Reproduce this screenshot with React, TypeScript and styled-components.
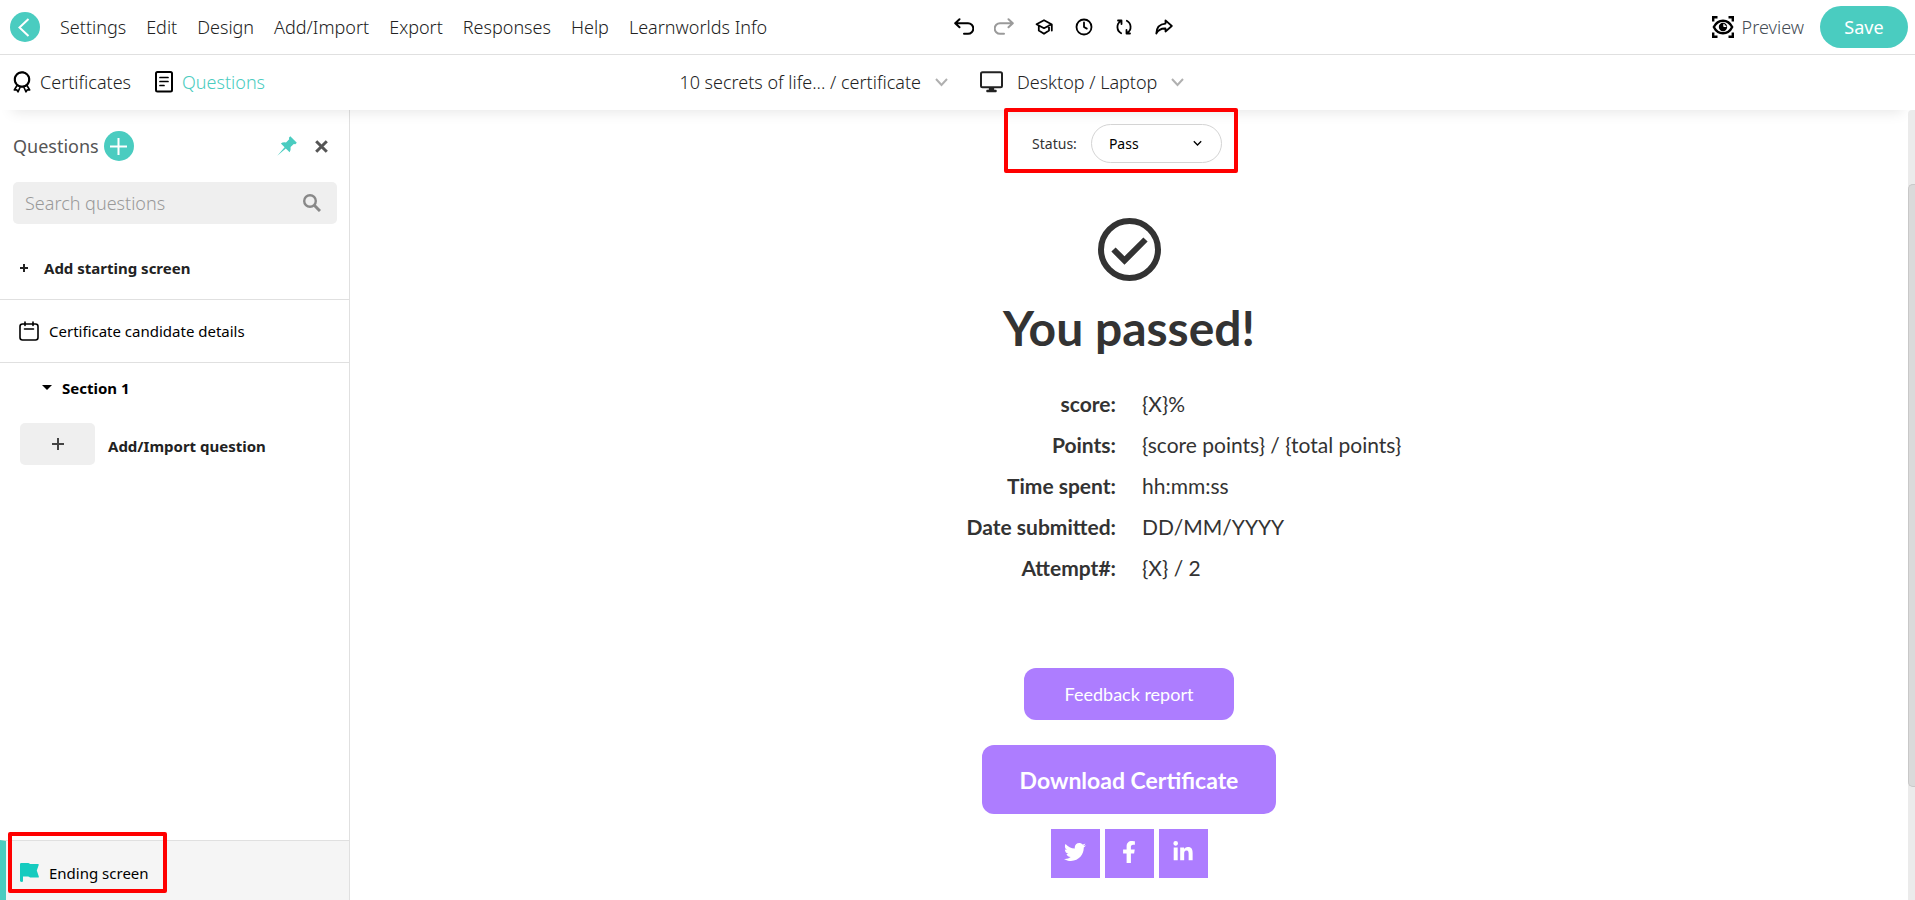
import React from "react";
import styled, { createGlobalStyle } from "styled-components";
import { FaTwitter, FaFacebookF, FaLinkedinIn } from "react-icons/fa";

const teal = "#4accc0";
const line = "#e0e0e0";
const violet = "#ad7dff";
const ink = "#333333";

const GlobalStyle = createGlobalStyle`
  *, *::before, *::after { box-sizing: border-box; }
  body { margin: 0; background: #fff; color: #222; font-family: "Noto Sans", sans-serif; font-size: 18px; font-weight: 300; }
  button, input, select { font: inherit; color: inherit; margin: 0; padding: 0; border: 0; background: none; }
  a { color: inherit; text-decoration: none; }
  svg { display: block; flex: none; }
`;

const Page = styled.div`
  display: flex;
  flex-direction: column;
  height: 100vh;
  overflow: hidden;
`;

const TopBar = styled.header`
  display: grid;
  grid-template-columns: 99fr 100fr;
  align-items: center;
  height: 55px;
  flex: none;
  padding: 0 7px 0 10px;
  border-bottom: 1px solid ${line};
`;

const Menu = styled.nav`
  display: flex;
  align-items: center;
  gap: 20px;
`;

const MenuButton = styled.button`
  line-height: 24px;
  white-space: nowrap;
`;

const RoundButton = styled.button`
  display: grid;
  place-items: center;
  width: 30px;
  height: 30px;
  border-radius: 50%;
  background: ${teal};
  color: #fff;
`;

const Tools = styled.div`
  display: flex;
  align-items: center;
  justify-content: space-between;
`;

const ToolGroup = styled.div`
  display: flex;
  align-items: center;
  gap: 20px;
`;

const IconButton = styled.button<{ $faded?: boolean }>`
  display: grid;
  place-items: center;
  width: 20px;
  height: 24px;
  color: ${(p) => (p.$faded ? "#9a9a9a" : "#000")};
`;

const Actions = styled.div`
  display: flex;
  align-items: center;
  gap: 16px;
`;

const PreviewButton = styled.button`
  display: flex;
  align-items: center;
  gap: 8px;
  color: #444c55;

  svg { color: #000; }
`;

const SaveButton = styled.button`
  width: 88px;
  height: 42px;
  border-radius: 21px;
  background: ${teal};
  color: #fff;
  font-weight: 400;
`;

const SubBar = styled.div`
  position: relative;
  z-index: 2;
  display: grid;
  grid-template-columns: 13fr auto 14fr;
  align-items: center;
  height: 55px;
  flex: none;
  padding: 0 13px 1px;
  background: #fff;
  box-shadow: 0 14px 14px -12px rgba(0, 0, 0, 0.1);
`;

const Tabs = styled.nav`
  display: flex;
  align-items: center;
  gap: 24px;
`;

const Tab = styled.a<{ $active?: boolean }>`
  display: flex;
  align-items: center;
  gap: 9px;
  color: ${(p) => (p.$active ? teal : "#222")};

  svg { color: #000; }
`;

const Pickers = styled.div`
  display: flex;
  align-items: center;
  gap: 32px;
`;

const Picker = styled.button`
  display: flex;
  align-items: center;
  gap: 14px;
  white-space: nowrap;
`;

const Body = styled.div`
  display: flex;
  flex: 1;
  min-height: 0;
`;

const Sidebar = styled.aside`
  display: flex;
  flex-direction: column;
  width: 350px;
  flex: none;
  border-right: 1px solid ${line};
`;

const PanelHead = styled.div`
  display: flex;
  align-items: center;
  padding: 21px 18px 21px 13px;
`;

const PanelTitle = styled.h2`
  margin: 0 5px 0 0;
  font-size: 18px;
  font-weight: 400;
  line-height: 24px;
  color: #555;
`;

const PanelTools = styled.div`
  display: flex;
  align-items: center;
  gap: 14px;
  margin-left: auto;
`;

const PanelButton = styled.button<{ $accent?: boolean }>`
  display: grid;
  place-items: center;
  width: 20px;
  height: 24px;
  color: ${(p) => (p.$accent ? teal : "#555")};
`;

const SearchField = styled.label`
  display: flex;
  align-items: center;
  height: 42px;
  margin: 0 12px 0 13px;
  padding: 0 16px 0 12px;
  border-radius: 5px;
  background: #efefef;
  color: #888;
`;

const SearchInput = styled.input`
  flex: 1;
  min-width: 0;
  outline: 0;
  color: ${ink};

  &::placeholder { color: #999; opacity: 1; }
`;

const StartRow = styled.button`
  display: flex;
  align-items: center;
  gap: 16px;
  height: 76px;
  padding: 13px 20px 0;
  border-bottom: 1px solid ${line};
  font-size: 15px;
  font-weight: 700;
`;

const DetailsRow = styled.button`
  display: flex;
  align-items: center;
  gap: 10px;
  height: 63px;
  padding: 0 19px;
  border-bottom: 1px solid ${line};
  font-size: 15px;
  font-weight: 400;
  color: #000;
`;

const SectionRow = styled.button`
  display: flex;
  align-items: center;
  gap: 10px;
  height: 50px;
  padding: 0 42px;
  font-size: 15px;
  font-weight: 700;
  color: #000;
`;

const AddRow = styled.div`
  display: flex;
  align-items: center;
  gap: 13px;
  padding: 10px 20px;
`;

const AddTile = styled.button`
  display: grid;
  place-items: center;
  width: 75px;
  height: 42px;
  border-radius: 5px;
  background: #efefef;
  color: #444;
`;

const AddLabel = styled.label`
  padding-top: 4px;
  font-size: 15px;
  font-weight: 700;
`;

const EndingRow = styled.button`
  position: relative;
  display: flex;
  align-items: center;
  gap: 10px;
  height: 60px;
  margin-top: auto;
  padding: 4px 20px 0 14px;
  border-top: 1px solid ${line};
  border-left: 6px solid ${teal};
  background: #f5f5f5;
  font-size: 15px;
  font-weight: 400;
  color: #000;
`;

const Highlight = styled.span`
  position: absolute;
  border: 4px solid #ff0000;
  border-radius: 2px;
  pointer-events: none;
`;

const EndingHighlight = styled(Highlight)`
  top: -9px;
  left: 2px;
  width: 159px;
  height: 61px;
`;

const StatusHighlight = styled(Highlight)`
  inset: -16px -16px -10px -28px;
`;

const Canvas = styled.main`
  display: flex;
  flex-direction: column;
  align-items: center;
  flex: 1;
  min-width: 0;
  color: ${ink};
  font-family: Lato, sans-serif;
  font-weight: 400;
`;

const StatusBar = styled.div`
  position: relative;
  z-index: 3;
  display: flex;
  align-items: center;
  gap: 14px;
  margin: 14px 4px 0 0;
  font-family: "Noto Sans", sans-serif;
  font-size: 14px;
`;

const SelectWrap = styled.div`
  position: relative;

  svg { position: absolute; right: 20px; top: 16px; pointer-events: none; }
`;

const StatusSelect = styled.select`
  display: block;
  width: 131px;
  height: 39px;
  padding-left: 17px;
  border: 1px solid #d4d4d4;
  border-radius: 20px;
  appearance: none;
  background: #fff;
  color: #000;
`;

const Badge = styled.div`
  margin-top: 55px;
`;

const Title = styled.h1`
  margin: 17px 0 0;
  font-size: 48px;
  font-weight: 700;
  line-height: 60px;
`;

const Results = styled.table`
  width: 100%;
  margin-top: 25px;
  table-layout: fixed;
  border-collapse: collapse;
  font-size: 21px;
  line-height: 41px;

  th, td { width: 50%; padding: 0 13px; }
  th { text-align: right; font-weight: 700; }
`;

const FeedbackButton = styled.button`
  width: 210px;
  height: 52px;
  margin-top: 80px;
  border-radius: 12px;
  background: ${violet};
  color: #fff;
  font-size: 18px;
`;

const DownloadButton = styled.button`
  width: 294px;
  height: 69px;
  margin-top: 25px;
  border-radius: 12px;
  background: ${violet};
  color: #fff;
  font-size: 23px;
  font-weight: 700;
`;

const Social = styled.div`
  display: flex;
  gap: 5px;
  margin-top: 15px;
`;

const SocialLink = styled.a`
  display: grid;
  place-items: center;
  width: 49px;
  height: 49px;
  padding-bottom: 3px;
  background: ${violet};
  color: #fff;
  font-size: 22px;
`;

const ScrollTrack = styled.div`
  display: flex;
  flex-direction: column;
  position: relative;
  z-index: 3;
  width: 7px;
  border-radius: 4px 0 0 0;
  background: #ebebeb;

  &::before { content: ""; flex: 74; }
  &::after { content: ""; flex: 113; }
`;

const ScrollThumb = styled.div`
  flex: 603;
  border: 1px solid #c8c8c8;
  border-right: 0;
  border-radius: 5px 0 0 5px;
  background: #dadada;
`;

type StrokeProps = { w: number; h: number; sw?: number; children: React.ReactNode };
const Stroke = ({ w, h, sw = 2, children }: StrokeProps) => (
  <svg width={w} height={h} viewBox={`0 0 ${w} ${h}`} fill="none" stroke="currentColor" strokeWidth={sw} strokeLinecap="round" strokeLinejoin="round" aria-hidden="true">
    {children}
  </svg>
);

const BackIcon = () => <Stroke w={30} h={30}><path d="M18.500 7 9.500 15.500 18.500 24" strokeLinejoin="miter" strokeLinecap="butt" /></Stroke>;
const UndoIcon = () => <Stroke w={20} h={18}><path d="M5.500 1.200 1.200 5.200l4.300 4M1.500 5.200H14a5 5 0 0 1 0 10.600H10" /></Stroke>;
const RedoIcon = () => <Stroke w={20} h={18}><path d="m14.500 1.200 4.300 4-4.300 4M18.500 5.200H6a5 5 0 0 0 0 10.600h4" /></Stroke>;
const CapIcon = () => (
  <Stroke w={18} h={16} sw={1.8}><path d="M9 1.200 1.500 5.200 9 9.200l7.500-4zM3.800 6.500v5L9 14.800l5-3.300v-5M16.800 5.500v6" /></Stroke>
);
const ClockIcon = () => <Stroke w={18} h={18} sw={1.8}><circle cx="9" cy="9" r="7.500" /><path d="M9 4.500V9l2.800 1.600" /></Stroke>;
const SyncIcon = () => (
  <Stroke w={16} h={16} sw={1.8}><path d="M5.200 14.200A7 7 0 0 1 4.500 2.200M2 1.500h3.500V5M10.800 1.800A7 7 0 0 1 11.500 13.800M14 14.500h-3.500V11" /></Stroke>
);
const ShareIcon = () => (
  <Stroke w={18} h={16} sw={1.8}><path d="M10.500 1.300 16.800 7l-6.300 5.500V9.500C6 9.300 3.300 10.500 1.300 14.500 1.500 9 4.500 5 10.500 4.600z" /></Stroke>
);
const PreviewIcon = () => (
  <Stroke w={22} h={22} sw={2.4}>
    <path d="M1.200 5.500V1.200H5.500M16.500 1.200h4.300V5.500M20.800 16.500v4.300H16.500M5.500 20.800H1.200V16.500" strokeLinecap="butt" strokeLinejoin="miter" />
    <path d="M1.800 11C6 2.600 16 2.600 20.200 11 16 19.400 6 19.400 1.800 11z" />
    <circle cx="11" cy="11" r="3" fill="currentColor" />
    <path d="M12 8.500v1.800h1.800" stroke="#fff" strokeWidth="1.400" />
  </Stroke>
);
const MedalIcon = () => (
  <Stroke w={18} h={22}>
    <circle cx="9" cy="8.500" r="7.300" strokeDasharray="3.400 1.200" />
    <circle cx="9" cy="8.500" r="7" strokeWidth="1.500" />
    <path d="M4 14.500 1.300 19l2.400-.2L5 20.800 7 16.500M14 14.500l2.700 4.500-2.400-.2-1.300 2L11 16.500" strokeWidth="1.600" />
  </Stroke>
);
const DocIcon = () => (
  <Stroke w={18} h={22}><rect x="1" y="1" width="16" height="19.500" rx="1.500" /><path d="M5 6.500h8M5 10.500h8M5 14.500h4" strokeWidth="1.700" /></Stroke>
);
const ChevronIcon = () => <svg width="13" height="10" viewBox="0 0 13 10" fill="none" stroke="#b0b0b0" strokeWidth="2" aria-hidden="true"><path d="m1 2 5.500 6L12 2" /></svg>;
const MonitorIcon = () => (
  <Stroke w={23} h={22}><rect x="1" y="1.200" width="21" height="15" rx="1.500" /><path d="M9.500 17.500h4v2h2.500v1H7v-1h2.500z" fill="currentColor" strokeWidth="1.400" /></Stroke>
);
const PlusIcon = ({ size, sw }: { size: number; sw: number }) => (
  <svg width={size} height={size} viewBox={`0 0 ${size} ${size}`} stroke="currentColor" strokeWidth={sw} aria-hidden="true">
    <path d={`M${size / 2} 0v${size}M0 ${size / 2}h${size}`} />
  </svg>
);
const PinIcon = () => (
  <svg width="20" height="20" viewBox="0 0 20 20" fill="currentColor" aria-hidden="true">
    <path d="M13.300.3 19.800 6.800 18.300 8.200 16.800 7.900 13.600 11.100Q14 14.600 12.600 16.200L8.800 12.400.3 19.800 7.600 11.200 3.900 7.500Q5.500 6 9 6.400L12.200 3.200 11.900 1.700z" />
  </svg>
);
const CloseIcon = () => <Stroke w={13} h={13} sw={3}><path d="m1.200 1.200 10.600 10.600M11.800 1.200 1.200 11.800" strokeLinecap="butt" /></Stroke>;
const SearchIcon = () => <Stroke w={18} h={18} sw={2.4}><circle cx="7" cy="7" r="5.800" /><path d="m11.500 11.500 5.500 5.500" strokeWidth="3" strokeLinecap="butt" /></Stroke>;
const CalendarIcon = () => (
  <Stroke w={20} h={20} sw={1.6}><rect x="1" y="3" width="18" height="16" rx="2.500" /><path d="M6 1v3.500M14 1v3.500M5.500 8h9" /></Stroke>
);
const TriangleIcon = () => <svg width="10" height="6" viewBox="0 0 10 6" fill="currentColor" aria-hidden="true"><path d="M0 0h10L5 5z" /></svg>;
const FlagIcon = () => (
  <svg width="19" height="19" viewBox="0 0 19 19" fill="#15cbbf" aria-hidden="true"><path d="M0 1.200Q0 0 1.200 0H8q1.200 0 2 .9h8q1.200 0 .7 1L16.800 7.500l2 6q.3 1-.8 1H10q-1-.9-2-.9H3V18q0 1-1.200 1T0 18z" /></svg>
);
const PassIcon = () => (
  <svg width="63" height="63" viewBox="0 0 63 63" fill="none" stroke={ink} strokeWidth="6" aria-hidden="true"><circle cx="31.500" cy="31.500" r="28.500" /><path d="M15.500 31.500 26.500 42.500 47.500 21.500" /></svg>
);

const menuItems = ["Settings", "Edit", "Design", "Add/Import", "Export", "Responses", "Help", "Learnworlds Info"];

const tools = [
  { label: "Undo", icon: <UndoIcon /> },
  { label: "Redo", icon: <RedoIcon />, faded: true },
  { label: "Courses", icon: <CapIcon /> },
  { label: "History", icon: <ClockIcon /> },
  { label: "Refresh", icon: <SyncIcon /> },
  { label: "Share", icon: <ShareIcon /> },
];

const results = [
  ["score:", "{X}%"],
  ["Points:", "{score points} / {total points}"],
  ["Time spent:", "hh:mm:ss"],
  ["Date submitted:", "DD/MM/YYYY"],
  ["Attempt#:", "{X} / 2"],
];

export default function App() {
  return (
    <Page>
      <GlobalStyle />
      <TopBar>
        <Menu>
          <RoundButton aria-label="Back"><BackIcon /></RoundButton>
          {menuItems.map((item) => <MenuButton key={item}>{item}</MenuButton>)}
        </Menu>
        <Tools>
          <ToolGroup>
            {tools.map((tool) => (
              <IconButton key={tool.label} aria-label={tool.label} $faded={tool.faded}>{tool.icon}</IconButton>
            ))}
          </ToolGroup>
          <Actions>
            <PreviewButton><PreviewIcon />Preview</PreviewButton>
            <SaveButton>Save</SaveButton>
          </Actions>
        </Tools>
      </TopBar>
      <SubBar>
        <Tabs>
          <Tab href="#certificates"><MedalIcon />Certificates</Tab>
          <Tab href="#questions" $active><DocIcon />Questions</Tab>
        </Tabs>
        <Pickers>
          <Picker>10 secrets of life... / certificate<ChevronIcon /></Picker>
          <Picker><MonitorIcon />Desktop / Laptop<ChevronIcon /></Picker>
        </Pickers>
      </SubBar>
      <Body>
        <Sidebar>
          <PanelHead>
            <PanelTitle>Questions</PanelTitle>
            <RoundButton aria-label="Add question"><PlusIcon size={17} sw={2} /></RoundButton>
            <PanelTools>
              <PanelButton aria-label="Pin panel" $accent><PinIcon /></PanelButton>
              <PanelButton aria-label="Close panel"><CloseIcon /></PanelButton>
            </PanelTools>
          </PanelHead>
          <SearchField>
            <SearchInput type="text" placeholder="Search questions" aria-label="Search questions" />
            <SearchIcon />
          </SearchField>
          <StartRow><PlusIcon size={8} sw={2} />Add starting screen</StartRow>
          <DetailsRow><CalendarIcon />Certificate candidate details</DetailsRow>
          <SectionRow><TriangleIcon />Section 1</SectionRow>
          <AddRow>
            <AddTile id="add-question"><PlusIcon size={12} sw={2} /></AddTile>
            <AddLabel htmlFor="add-question">Add/Import question</AddLabel>
          </AddRow>
          <EndingRow><FlagIcon />Ending screen<EndingHighlight /></EndingRow>
        </Sidebar>
        <Canvas>
          <StatusBar>
            <label htmlFor="status">Status:</label>
            <SelectWrap>
              <StatusSelect id="status" defaultValue="Pass">
                <option>Pass</option>
                <option>Fail</option>
              </StatusSelect>
              <svg width="9" height="7" viewBox="0 0 9 7" fill="none" stroke="#000" strokeWidth="1.300" aria-hidden="true"><path d="m.8 1.200 3.700 3.800 3.700-3.800" /></svg>
            </SelectWrap>
            <StatusHighlight />
          </StatusBar>
          <Badge><PassIcon /></Badge>
          <Title>You passed!</Title>
          <Results>
            <tbody>
              {results.map(([name, value]) => (
                <tr key={name}><th scope="row">{name}</th><td>{value}</td></tr>
              ))}
            </tbody>
          </Results>
          <FeedbackButton>Feedback report</FeedbackButton>
          <DownloadButton>Download Certificate</DownloadButton>
          <Social>
            <SocialLink href="#twitter" aria-label="Share on Twitter"><FaTwitter /></SocialLink>
            <SocialLink href="#facebook" aria-label="Share on Facebook"><FaFacebookF /></SocialLink>
            <SocialLink href="#linkedin" aria-label="Share on LinkedIn"><FaLinkedinIn /></SocialLink>
          </Social>
        </Canvas>
        <ScrollTrack><ScrollThumb /></ScrollTrack>
      </Body>
    </Page>
  );
}
